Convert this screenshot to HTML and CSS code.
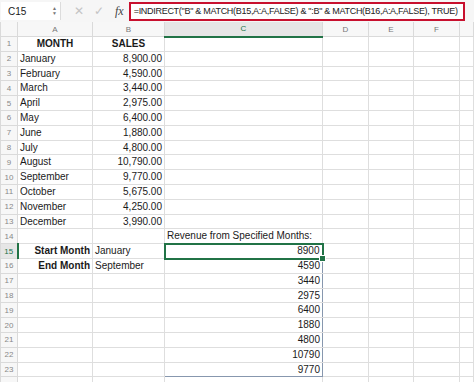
FILE: index.html
```html
<!DOCTYPE html>
<html lang="en">
<head>
    <meta charset="UTF-8">
    <title>INDIRECT MATCH</title>
    <link rel="stylesheet" href="styles.css">
</head>
<body>

    <div class="barra">
        <div class="nome-caixa">
            <span>C15</span>
            <span class="setas">&#9650;<br>&#9660;</span>
        </div>
        <span class="btn-x">&#10005;</span>
        <span class="btn-ok">&#10003;</span>
        <span class="fx">fx</span>
        <div class="formula">=INDIRECT("B" &amp; MATCH(B15,A:A,FALSE) &amp; ":B" &amp; MATCH(B16,A:A,FALSE), TRUE)</div>
    </div>

    <table class="planilha">
        <colgroup>
            <col style="width:17px"><col style="width:75px"><col style="width:72px"><col style="width:158px">
            <col style="width:46px"><col style="width:45px"><col style="width:46px"><col>
        </colgroup>
        <tr class="cab"><th class="canto"></th><th>A</th><th>B</th><th class="col-sel">C</th><th>D</th><th>E</th><th>F</th><th></th></tr>
        <tr><th>1</th><td class="negrito centro">MONTH</td><td class="negrito centro">SALES</td><td></td><td></td><td></td><td></td><td></td></tr>
        <tr><th>2</th><td>January</td><td class="num">8,900.00</td><td></td><td></td><td></td><td></td><td></td></tr>
        <tr><th>3</th><td>February</td><td class="num">4,590.00</td><td></td><td></td><td></td><td></td><td></td></tr>
        <tr><th>4</th><td>March</td><td class="num">3,440.00</td><td></td><td></td><td></td><td></td><td></td></tr>
        <tr><th>5</th><td>April</td><td class="num">2,975.00</td><td></td><td></td><td></td><td></td><td></td></tr>
        <tr><th>6</th><td>May</td><td class="num">6,400.00</td><td></td><td></td><td></td><td></td><td></td></tr>
        <tr><th>7</th><td>June</td><td class="num">1,880.00</td><td></td><td></td><td></td><td></td><td></td></tr>
        <tr><th>8</th><td>July</td><td class="num">4,800.00</td><td></td><td></td><td></td><td></td><td></td></tr>
        <tr><th>9</th><td>August</td><td class="num">10,790.00</td><td></td><td></td><td></td><td></td><td></td></tr>
        <tr><th>10</th><td>September</td><td class="num">9,770.00</td><td></td><td></td><td></td><td></td><td></td></tr>
        <tr><th>11</th><td>October</td><td class="num">5,675.00</td><td></td><td></td><td></td><td></td><td></td></tr>
        <tr><th>12</th><td>November</td><td class="num">4,250.00</td><td></td><td></td><td></td><td></td><td></td></tr>
        <tr><th>13</th><td>December</td><td class="num">3,990.00</td><td></td><td></td><td></td><td></td><td></td></tr>
        <tr><th>14</th><td></td><td></td><td>Revenue from Specified Months:</td><td></td><td></td><td></td><td></td></tr>
        <tr><th class="linha-sel">15</th><td class="negrito num">Start Month</td><td>January</td><td class="num ativa">8900</td><td></td><td></td><td></td><td></td></tr>
        <tr><th>16</th><td class="negrito num">End Month</td><td>September</td><td class="num faixa">4590</td><td></td><td></td><td></td><td></td></tr>
        <tr><th>17</th><td></td><td></td><td class="num faixa">3440</td><td></td><td></td><td></td><td></td></tr>
        <tr><th>18</th><td></td><td></td><td class="num faixa">2975</td><td></td><td></td><td></td><td></td></tr>
        <tr><th>19</th><td></td><td></td><td class="num faixa">6400</td><td></td><td></td><td></td><td></td></tr>
        <tr><th>20</th><td></td><td></td><td class="num faixa">1880</td><td></td><td></td><td></td><td></td></tr>
        <tr><th>21</th><td></td><td></td><td class="num faixa">4800</td><td></td><td></td><td></td><td></td></tr>
        <tr><th>22</th><td></td><td></td><td class="num faixa">10790</td><td></td><td></td><td></td><td></td></tr>
        <tr><th>23</th><td></td><td></td><td class="num faixa fim">9770</td><td></td><td></td><td></td><td></td></tr>
        <tr><th></th><td></td><td></td><td></td><td></td><td></td><td></td><td></td></tr>
    </table>

</body>
</html>
```

FILE: styles.css
```css
body {
    margin: 0;
    font-family: "Liberation Sans", Arial, sans-serif;
    font-size: 10px;
    color: #1a1a1a;
    background-color: white;
    overflow: hidden;
}
.barra {
    display: flex;
    align-items: center;
    height: 22px;
    background-color: #f6f6f6;
}
.nome-caixa {
    display: flex;
    align-items: center;
    justify-content: space-between;
    width: 60px;
    height: 18px;
    margin-left: 1px;
    padding-left: 7px;
    box-sizing: border-box;
    background-color: white;
    border-right: 1px solid #dcdcdc;
    font-size: 10px;
}
.setas {
    font-size: 5px;
    line-height: 5px;
    color: #777;
    margin-right: 3px;
    text-align: center;
}
.btn-x, .btn-ok {
    color: #c4c4c4;
    font-size: 12px;
}
.btn-x {
    margin-left: 13px;
}
.btn-ok {
    margin-left: 10px;
}
.fx {
    margin-left: 11px;
    font-family: "Liberation Serif", serif;
    font-style: italic;
    font-size: 12px;
    color: #444;
}
.formula {
    margin-left: 5px;
    width: 336px;
    height: 19px;
    box-sizing: border-box;
    padding-left: 3px;
    border: 2px solid #c8102e;
    background-color: white;
    line-height: 15px;
    white-space: nowrap;
    overflow: hidden;
    font-size: 9px;
    letter-spacing: -0.29px;
    color: #222;
}
.planilha {
    border-collapse: collapse;
    table-layout: fixed;
    width: 100%;
}
.planilha tr {
    height: 14.8px;
}
.planilha tr.cab {
    height: 14.6px;
}
.planilha th {
    background-color: #f7f7f7;
    color: #888;
    font-weight: normal;
    font-size: 8px;
    border: 1px solid #dadada;
    padding: 0;
    text-align: center;
}
.planilha .cab th {
    color: #777;
    border-top: none;
}
.planilha td {
    border: 1px solid #dedede;
    padding: 0 2px;
    white-space: nowrap;
    overflow: visible;
    line-height: 12px;
}
.negrito {
    font-weight: bold;
}
.centro {
    text-align: center;
}
.num {
    text-align: right;
}
.planilha th.col-sel {
    color: #217346;
    border-bottom: 2px solid #217346;
    background-color: #e6e6e6;
}
.planilha th.linha-sel {
    color: #217346;
    border-right: 2px solid #217346;
    background-color: #e6e6e6;
}
.planilha td.faixa {
    border-left: 1px solid #8797ae;
    border-right: 1px solid #8797ae;
}
.planilha td.fim {
    border-bottom: 1px solid #8797ae;
}
.planilha td.ativa {
    position: relative;
    border: 2px solid #217346;
}
.ativa::after {
    content: "";
    position: absolute;
    right: -4px;
    bottom: -4px;
    width: 5px;
    height: 5px;
    background-color: #217346;
    border: 1px solid white;
}
```
